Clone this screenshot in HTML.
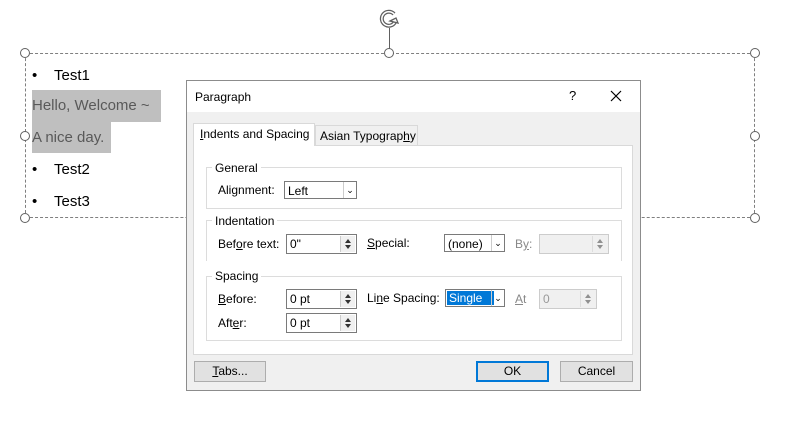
<!DOCTYPE html>
<html><head><style>
body{margin:0;width:797px;height:424px;background:#fff;position:relative;overflow:hidden;font-family:"Liberation Sans",sans-serif;}
.a{position:absolute;}
.h{position:absolute;width:10px;height:10px;border:1.7px solid #606060;border-radius:50%;background:#fff;box-sizing:border-box;}
.t{position:absolute;font-size:15px;color:#000;}
.d{font-size:12px;color:#000;position:absolute;white-space:nowrap;}
.grp{position:absolute;border:1px solid #dcdcdc;}
.lbl{position:absolute;background:#fff;padding:0 3px;font-size:12px;}
.inp{position:absolute;background:#fff;border:1px solid #7a7a7a;box-sizing:border-box;font-size:12px;padding:2px 0 0 3px;}
.spin{position:absolute;right:1px;top:1px;bottom:1px;width:14px;border-left:1px solid #ccc;background:#f0f0f0;}
.spin:before{content:"";position:absolute;left:4px;top:3px;border:3px solid transparent;border-bottom:4px solid #333;border-top:0;}
.spin:after{content:"";position:absolute;left:4px;bottom:3px;border:3px solid transparent;border-top:4px solid #333;border-bottom:0;}
.sel{position:absolute;background:#fff;border:1px solid #7a7a7a;box-sizing:border-box;font-size:12px;padding:2px 0 0 3px;}
.sel i{position:absolute;right:0;top:0;bottom:0;width:12px;border-left:1px solid #ccc;font-style:normal;font-size:9px;text-align:center;line-height:16px;}
.btn{position:absolute;background:#e1e1e1;border:1px solid #adadad;box-sizing:border-box;font-size:12px;text-align:center;line-height:19px;}
u{text-decoration:underline;}
</style></head><body>
<div class="a" style="left:25px;top:53px;width:730px;height:165px;border:1px dashed #7f7f7f;box-sizing:border-box;"></div>
<div class="a" style="left:389px;top:28px;width:1px;height:22px;background:#606060;"></div>
<svg class="a" style="left:378px;top:8px" width="22" height="22" viewBox="0 0 22 22"><path d="M16 6A7 7 0 1 0 17 14" fill="none" stroke="#606060" stroke-width="4"/><path d="M16 6A7 7 0 1 0 17 14" fill="none" stroke="#fff" stroke-width="1.5"/><path d="M12 13l6-3 2 5z" fill="#fff" stroke="#606060" stroke-width="1.3"/></svg>
<div class="h" style="left:20px;top:48px"></div><div class="h" style="left:384px;top:48px"></div><div class="h" style="left:750px;top:48px"></div>
<div class="h" style="left:20px;top:131px"></div><div class="h" style="left:750px;top:131px"></div>
<div class="h" style="left:20px;top:213px"></div><div class="h" style="left:384px;top:213px"></div><div class="h" style="left:750px;top:213px"></div>
<div class="t" style="left:32px;top:67px">•</div><div class="t" style="left:54px;top:67px">Test1</div>
<div class="a" style="left:32px;top:90px;width:129px;height:32px;background:#bfbfbf;"></div>
<div class="a" style="left:32px;top:122px;width:79px;height:31px;background:#bfbfbf;"></div>
<div class="t" style="left:32px;top:97px;color:#595959">Hello, Welcome ~</div>
<div class="t" style="left:32px;top:129px;color:#595959">A nice day.</div>
<div class="t" style="left:32px;top:161px">•</div><div class="t" style="left:54px;top:161px">Test2</div>
<div class="t" style="left:32px;top:193px">•</div><div class="t" style="left:54px;top:193px">Test3</div>

<div class="a" style="left:186px;top:80px;width:455px;height:311px;background:#f0f0f0;border:1px solid #8c8c8c;box-sizing:border-box;"></div>
<div class="a" style="left:187px;top:81px;width:453px;height:31px;background:#fff;"></div>
<div class="d" style="left:195px;top:90px">Paragraph</div>
<div class="d" style="left:569px;top:88px;font-size:13px">?</div>
<svg class="a" style="left:610px;top:90px" width="12" height="12"><path d="M1 1L11 11M11 1L1 11" stroke="#000" stroke-width="1.2"/></svg>
<div class="a" style="left:193px;top:145px;width:440px;height:210px;background:#fff;border:1px solid #d9d9d9;box-sizing:border-box;"></div>
<div class="a" style="left:315px;top:125px;width:103px;height:21px;background:#f0f0f0;border:1px solid #d9d9d9;box-sizing:border-box;"></div>
<div class="d" style="left:320px;top:129px">Asian Typograp<u>h</u>y</div>
<div class="a" style="left:193px;top:123px;width:122px;height:23px;background:#fff;border:1px solid #d9d9d9;border-bottom:none;box-sizing:border-box;"></div>
<div class="d" style="left:200px;top:127px"><u>I</u>ndents and Spacing</div>

<div class="grp" style="left:206px;top:167px;width:414px;height:40px;"></div>
<div class="lbl" style="left:212px;top:161px">General</div>
<div class="d" style="left:218px;top:183px">Ali<u>g</u>nment:</div>
<div class="sel" style="left:284px;top:181px;width:73px;height:18px">Left<i>⌄</i></div>

<div class="grp" style="left:206px;top:220px;width:414px;height:40px;border-bottom:none"></div>
<div class="lbl" style="left:212px;top:214px">Indentation</div>
<div class="d" style="left:218px;top:237px">Bef<u>o</u>re text:</div>
<div class="inp" style="left:286px;top:234px;width:71px;height:20px">0"<div class="spin"></div></div>
<div class="d" style="left:367px;top:236px"><u>S</u>pecial:</div>
<div class="sel" style="left:444px;top:234px;width:61px;height:18px">(none)<i>⌄</i></div>
<div class="d" style="left:515px;top:237px;color:#888">B<u>y</u>:</div>
<div class="inp" style="left:539px;top:234px;width:70px;height:20px;background:#f0f0f0;border-color:#ccc"><div class="spin" style="opacity:.5"></div></div>

<div class="grp" style="left:206px;top:276px;width:414px;height:63px;"></div>
<div class="lbl" style="left:212px;top:269px">Spacing</div>
<div class="d" style="left:218px;top:292px"><u>B</u>efore:</div>
<div class="inp" style="left:286px;top:289px;width:71px;height:20px">0 pt<div class="spin"></div></div>
<div class="d" style="left:367px;top:291px">Li<u>n</u>e Spacing:</div>
<div class="sel" style="left:445px;top:289px;width:60px;height:18px;padding:1px"><span style="background:#0078d7;color:#fff;display:inline-block;width:45px;padding-left:2px;height:14px;line-height:14px">Single</span><i>⌄</i></div>
<div class="d" style="left:515px;top:292px;color:#888"><u>A</u>t</div>
<div class="inp" style="left:539px;top:289px;width:58px;height:20px;background:#f0f0f0;border-color:#ccc;color:#999">0<div class="spin" style="opacity:.5"></div></div>
<div class="d" style="left:218px;top:316px">Aft<u>e</u>r:</div>
<div class="inp" style="left:286px;top:313px;width:71px;height:20px">0 pt<div class="spin"></div></div>

<div class="btn" style="left:194px;top:361px;width:72px;height:21px"><u>T</u>abs...</div>
<div class="btn" style="left:476px;top:361px;width:73px;height:21px;border:2px solid #0078d7;line-height:17px">OK</div>
<div class="btn" style="left:560px;top:361px;width:73px;height:21px">Cancel</div>
</body></html>
